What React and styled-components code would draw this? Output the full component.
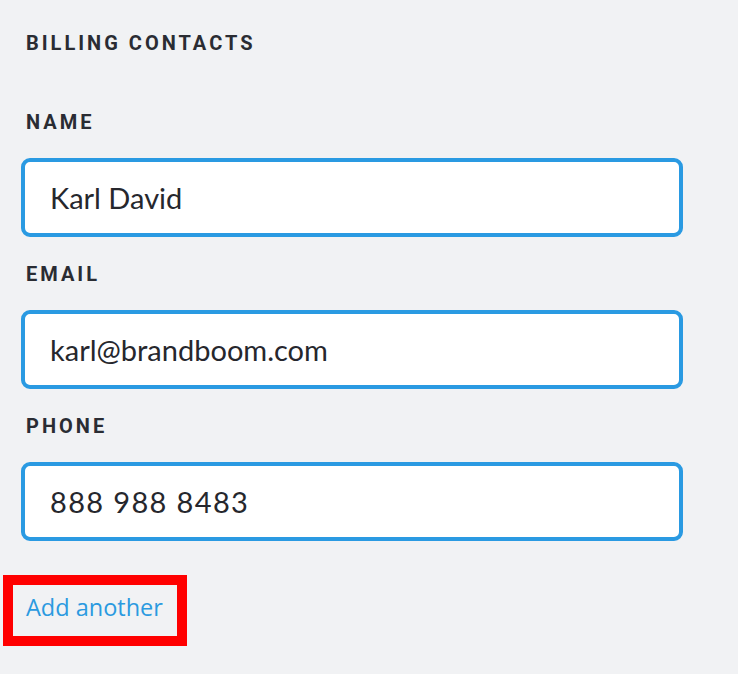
import React from "react";
import styled, { createGlobalStyle } from "styled-components";

const GlobalStyle = createGlobalStyle`
  html, body {
    margin: 0;
    padding: 0;
    background: #f1f2f4;
  }
  body {
    font-family: "Lato", "Liberation Sans", sans-serif;
    color: #2a2c33;
  }
`;

const Page = styled.div`
  padding: 31px 55px 28px 21px;
  display: flex;
  flex-direction: column;
`;

const Heading = styled.h2`
  margin: 0 0 55px 5px;
  font-family: "Roboto", "Liberation Sans", sans-serif;
  font-weight: 700;
  font-size: 20px;
  line-height: 24px;
  letter-spacing: 3px;
  text-transform: uppercase;
  color: #2a2c33;
`;

const Field = styled.div`
  display: flex;
  flex-direction: column;
  margin-bottom: 25px;
`;

const Label = styled.label`
  margin: 0 0 24px 5px;
  font-family: "Roboto", "Liberation Sans", sans-serif;
  font-weight: 700;
  font-size: 20px;
  line-height: 24px;
  letter-spacing: 3px;
  text-transform: uppercase;
  color: #2a2c33;
`;

const Input = styled.input`
  box-sizing: border-box;
  width: 662px;
  height: 79px;
  padding: 0 0 0 25px;
  border: 4px solid #2a9ae2;
  border-radius: 9px;
  background: #fff;
  font-family: "Lato", "Liberation Sans", sans-serif;
  font-size: 29px;
  letter-spacing: ${(p) => p.$tracking || "0"};
  color: #26272d;
  outline: none;
`;

const Highlight = styled.div`
  align-self: flex-start;
  margin: 9px 0 0 -18px;
  border: 10px solid #ff0000;
  padding: 7px 14px 13px 13px;
`;

const AddLink = styled.a`
  font-family: "Open Sans", "Liberation Sans", sans-serif;
  font-size: 23.5px;
  line-height: 31px;
  color: #2b9ae0;
  text-decoration: none;
  cursor: pointer;
`;

const fields = [
  { label: "Name", value: "Karl David" },
  { label: "Email", value: "karl@brandboom.com" },
  { label: "Phone", value: "888 988 8483", tracking: "1.35px" },
];

export default function App() {
  return (
    <>
      <GlobalStyle />
      <Page>
        <Heading>Billing Contacts</Heading>
        {fields.map((f) => (
          <Field key={f.label}>
            <Label>{f.label}</Label>
            <Input defaultValue={f.value} $tracking={f.tracking} />
          </Field>
        ))}
        <Highlight>
          <AddLink>Add another</AddLink>
        </Highlight>
      </Page>
    </>
  );
}
